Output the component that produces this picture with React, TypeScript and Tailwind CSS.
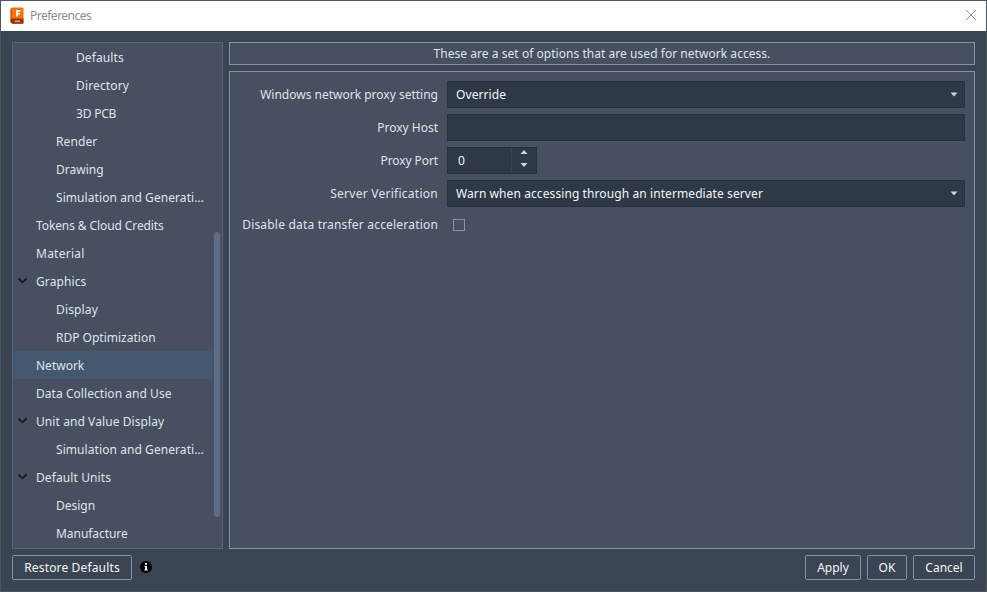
import type { ReactNode } from "react";

type TreeItem = {
    label: string;
    indent: string;
    tracking?: string;
    open?: boolean;
    active?: boolean;
};

const treeItems: TreeItem[] = [
    { label: "Defaults", indent: "pl-[63px]", tracking: "tracking-[0.11px]" },
    { label: "Directory", indent: "pl-[63px]", tracking: "tracking-[0.15px]" },
    { label: "3D PCB", indent: "pl-[63px]", tracking: "tracking-[-0.2px]" },
    { label: "Render", indent: "pl-[43px]", tracking: "tracking-[0.1px]" },
    { label: "Drawing", indent: "pl-[43px]" },
    { label: "Simulation and Generati…", indent: "pl-[43px]", tracking: "tracking-[0.07px]" },
    { label: "Tokens & Cloud Credits", indent: "pl-[23px]", tracking: "tracking-[-0.1px]" },
    { label: "Material", indent: "pl-[23px]", tracking: "tracking-[0.25px]" },
    { label: "Graphics", indent: "pl-[23px]", tracking: "tracking-[0.1px]", open: true },
    { label: "Display", indent: "pl-[43px]", tracking: "tracking-[0.15px]" },
    { label: "RDP Optimization", indent: "pl-[43px]" },
    { label: "Network", indent: "pl-[23px]", active: true },
    { label: "Data Collection and Use", indent: "pl-[23px]", tracking: "tracking-[0.05px]" },
    { label: "Unit and Value Display", indent: "pl-[23px]", tracking: "tracking-[0.08px]", open: true },
    { label: "Simulation and Generati…", indent: "pl-[43px]", tracking: "tracking-[0.07px]" },
    { label: "Default Units", indent: "pl-[23px]", tracking: "tracking-[0.1px]", open: true },
    { label: "Design", indent: "pl-[43px]" },
    { label: "Manufacture", indent: "pl-[43px]", tracking: "tracking-[-0.05px]" },
];

const AppLogo = () => (
    <svg width="16" height="18" viewBox="0 0 16 18">
        <path d="M3 .5h10.500a1 1 0 0 1 1 1v14.200a1 1 0 0 1-1 1H3.200L1.500 15V2z" fill="#f4700f" />
        <path d="M1.500 2L3 .5v11l-1.500.5z" fill="#d95b06" />
        <path d="M1.500 12l1.500-.5h11.500v4.200a1 1 0 0 1-1 1H3.200L1.500 15z" fill="#96380f" />
        <path d="M7.900 9.500V3.900h3.600M7.900 6.800h3" fill="none" stroke="#fff" strokeWidth="1.600" />
        <path d="M6 14.200h5" stroke="#e6c6b4" strokeWidth="1.200" />
    </svg>
);

const TitleBar = () => (
    <div className="flex h-[30px] shrink-0 items-center bg-white pl-2 pr-[9px]">
        <AppLogo />
        <span className="ml-[5px] flex-1 tracking-[-0.5px] text-[#8e8e8e]">Preferences</span>
        <svg className="-mt-[2px]" width="12" height="12" viewBox="0 0 12 12" fill="none" stroke="#8c8c8c">
            <path d="M1 1l10 10M11 1L1 11" />
        </svg>
    </div>
);

const TreeRow = ({ item }: { item: TreeItem }) => (
    <div
        className={`relative flex h-7 w-[199px] items-center whitespace-nowrap pt-[2px] ${item.indent} ${
            item.active ? "bg-[#445870]" : ""
        }`}
    >
        {item.open && (
            <svg className="absolute left-[4px] top-[10px]" width="11" height="7" viewBox="0 0 11 7">
                <path d="M1.500 1.500l4 3.800 4-3.800" fill="none" stroke="#111a27" strokeWidth="1.800" />
            </svg>
        )}
        <span className={item.tracking}>{item.label}</span>
    </div>
);

const Sidebar = () => (
    <div className="flex w-[211px] shrink-0 overflow-hidden border border-[#59647a] bg-[#474f61]">
        <div>
            {treeItems.map((item, i) => (
                <TreeRow key={i} item={item} />
            ))}
        </div>
        <div className="ml-[2px] mt-[189px] h-[285px] w-[6px] rounded-full bg-[#5e6d83]" />
    </div>
);

const Row = ({ label, tracking, children }: { label: string; tracking?: string; children: ReactNode }) => (
    <div className="flex h-[27px] items-center">
        <span className={`mr-[9px] w-[208px] shrink-0 whitespace-nowrap text-right ${tracking ?? ""}`}>
            {label}
        </span>
        {children}
    </div>
);

const Select = ({ value }: { value: string }) => (
    <div className="flex h-[27px] flex-1 items-center justify-between border border-[#28323f] bg-[#2f3846] pl-2 pr-[6px] text-[#f4f6f9]">
        <span className="tracking-[0.09px]">{value}</span>
        <svg className="-mt-px" width="8" height="5" viewBox="0 0 8 5">
            <path d="M.5.500h7L4 4.500z" fill="#c9d6e6" />
        </svg>
    </div>
);

const Button = ({ children, width }: { children: ReactNode; width: string }) => (
    <button
        className={`flex h-[25px] items-center justify-center rounded-[2px] border border-[#8491a6] pt-px text-[#f4f6f9] ${width}`}
    >
        {children}
    </button>
);

export default function App() {
    return (
        <div className="flex h-[592px] w-[987px] flex-col overflow-hidden border border-[#505660] bg-[#3b4453] font-['Noto_Sans',sans-serif] text-[12px] leading-4 text-[#dfe4eb]">
            <TitleBar />
            <div className="mt-[11px] flex h-[507px] shrink-0 gap-[6px] px-[11px]">
                <Sidebar />
                <div className="flex flex-1 flex-col gap-[6px]">
                    <div className="flex h-[23px] items-center justify-center border border-[#8592a7] bg-[#474f61] pt-px tracking-[0.04px]">
                        These are a set of options that are used for network access.
                    </div>
                    <div className="flex flex-1 flex-col gap-[6px] border border-[#8592a7] bg-[#474f61] pr-[9px] pt-[9px]">
                        <Row label="Windows network proxy setting">
                            <Select value="Override" />
                        </Row>
                        <Row label="Proxy Host">
                            <div className="h-[27px] flex-1 border border-[#28323f] bg-[#2f3846]" />
                        </Row>
                        <Row label="Proxy Port" tracking="tracking-[-0.1px]">
                            <div className="flex h-[27px] w-[90px] items-center border border-[#28323f] bg-[#2f3846] text-[#f4f6f9]">
                                <span className="w-[63px] pl-[10px]">0</span>
                                <div className="flex h-full w-6 flex-col items-center justify-center gap-[9px] border-l border-[#3b4453] pb-[4px]">
                                    <svg width="8" height="4" viewBox="0 0 8 4">
                                        <path d="M.5 4h7L4 0z" fill="#c9d6e6" />
                                    </svg>
                                    <svg width="8" height="4" viewBox="0 0 8 4">
                                        <path d="M.5 0h7L4 4z" fill="#c9d6e6" />
                                    </svg>
                                </div>
                            </div>
                        </Row>
                        <Row label="Server Verification" tracking="tracking-[0.26px]">
                            <Select value="Warn when accessing through an intermediate server" />
                        </Row>
                        <div className="-mt-[2px]">
                            <Row label="Disable data transfer acceleration" tracking="tracking-[0.19px]">
                                <div className="ml-[6px] h-3 w-3 border border-[#8491a6]" />
                            </Row>
                        </div>
                    </div>
                </div>
            </div>
            <div className="mt-[6px] flex items-center gap-[6px] px-[11px]">
                <Button width="w-[120px]">
                    <span className="tracking-[0.15px]">Restore Defaults</span>
                </Button>
                <svg className="-mt-px ml-[2px]" width="12" height="12" viewBox="0 0 12 12">
                    <circle cx="6" cy="6" r="6" fill="#000" />
                    <path d="M5 2h2v1.800H5zM4.500 5H7v3.500h.8v1H4.300v-1h.8V6h-.6z" fill="#fff" />
                </svg>
                <div className="flex-1" />
                <Button width="w-[56px]">Apply</Button>
                <Button width="w-[40px]">OK</Button>
                <Button width="w-[62px]">Cancel</Button>
            </div>
        </div>
    );
}
